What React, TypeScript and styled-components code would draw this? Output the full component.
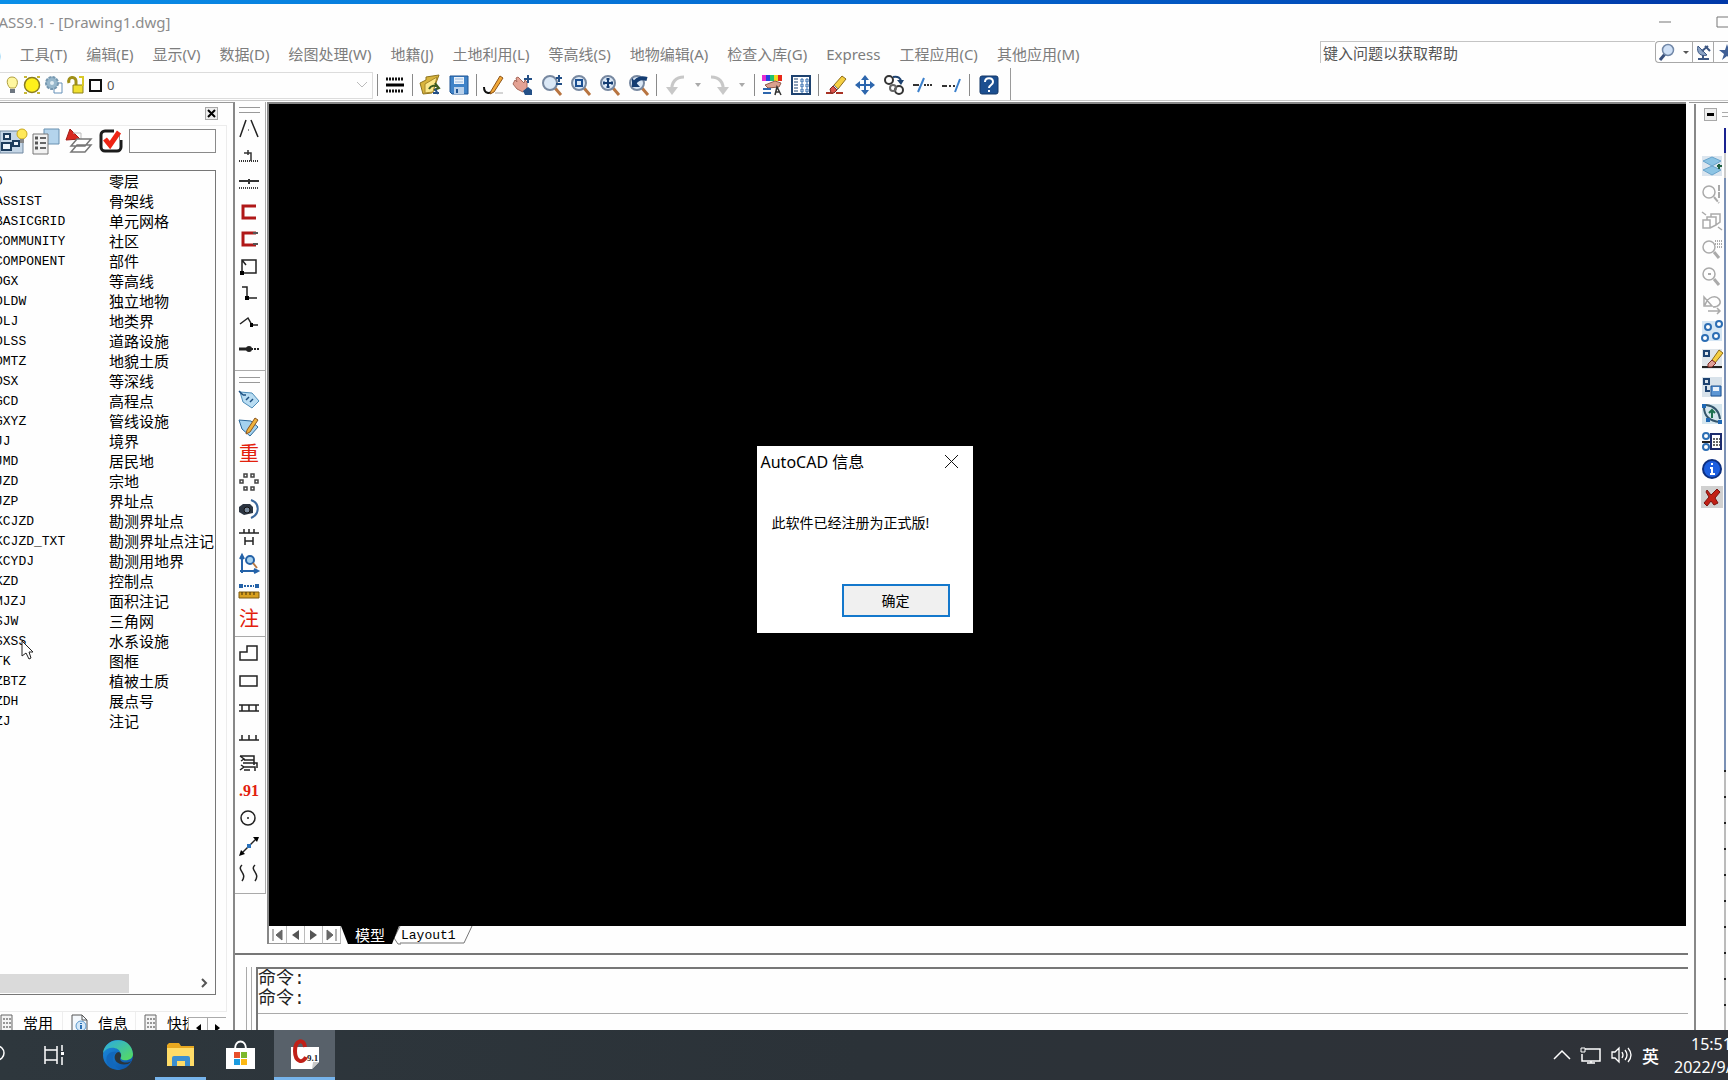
import React from "react";
import styled, { createGlobalStyle } from "styled-components";

const ui = `"Noto Sans", "Noto Sans CJK SC", sans-serif`;
const mono = `"Liberation Mono", "Noto Sans CJK SC", monospace`;

const Global = createGlobalStyle`
  * { box-sizing: border-box; }
  html, body { margin: 0; overflow: hidden; }
  body { background: #fefefe; color: #000; font-family: ${ui}; }
  button, input, select { font: inherit; color: inherit; margin: 0; padding: 0; border: 0; background: none; border-radius: 0; }
  button { display: flex; align-items: center; justify-content: center; }
  svg { display: block; flex: none; overflow: visible; }
`;

/* ---------- page frame ---------- */

const Desktop = styled.div`
  position: relative;
  display: flex;
  flex-direction: column;
  height: 100vh;
  overflow: hidden;
`;

const TopStrip = styled.div`
  height: 4px;
  flex: none;
  background: linear-gradient(90deg, #0a8fe8, #0468d0 50%, #0038a8);
`;

const TitleBar = styled.header`
  display: flex;
  align-items: center;
  height: 36px;
  flex: none;
  color: #8c8c8c;
`;

const Title = styled.h1`
  flex: 1;
  margin: 0 0 0 -11px;
  font-size: 15px;
  font-weight: 400;
  white-space: nowrap;
`;

const WindowButtons = styled.div`
  display: flex;
  gap: 46px;
  margin-right: -11px;
`;

const MenuRow = styled.div`
  display: flex;
  align-items: center;
  height: 28px;
  flex: none;
`;

const Menu = styled.nav`
  display: flex;
  flex: 1;
  gap: 19px;
  margin-left: -46px;
`;

const MenuLink = styled.a`
  font-size: 15px;
  line-height: 24px;
  color: #7d7d7d;
  text-decoration: none;
  white-space: nowrap;
`;

const HelpSearch = styled.div`
  display: flex;
  width: 408px;
  height: 22px;
  margin-bottom: 4px;
  flex: none;
`;

const HelpInput = styled.input`
  flex: 1;
  min-width: 0;
  padding-left: 2px;
  border-top: 1px solid #c4c4c4;
  border-left: 1px solid #c4c4c4;
  font-size: 15px;
  line-height: 20px;
  color: #555;
  &::placeholder { color: #555; opacity: 1; }
`;

const HelpButtons = styled.div`
  display: flex;
  width: 73px;
  overflow: hidden;
  border: 1px solid #a8a8a8;
  border-right: 0;
  border-radius: 4px 0 0 4px;
`;

const HelpButton = styled.button<{ $w: number }>`
  width: ${(p) => p.$w}px;
  flex: none;
  gap: 8px;
  & + & { border-left: 1px solid #a8a8a8; }
`;

const ToolbarRow = styled.div`
  display: flex;
  height: 33px;
  flex: none;
  border-bottom: 1px solid #c8c8c8;
`;

const Toolbar = styled.div`
  display: flex;
  align-items: center;
  padding: 2px 2px 0 0;
  border-right: 1px solid #9a9a9a;
`;

const LayerCombo = styled.div`
  display: flex;
  align-items: center;
  gap: 4px;
  width: 373px;
  height: 27px;
  margin-right: 4px;
  padding: 0 5px 0 6px;
  border: 1px solid #dcdcdc;
  border-left: 0;
`;

const LayerSelect = styled.select`
  flex: 1;
  appearance: none;
  padding-left: 1px;
  font-size: 13px;
  color: #555;
`;

const ToolGroup = styled.div<{ $pad?: number }>`
  display: flex;
  align-items: center;
  gap: 9px;
  height: 22px;
  padding: 0 ${(p) => p.$pad ?? 7}px;
  border-left: 1px solid #8a8a8a;
`;

const ToolButton = styled.button`
  width: 20px;
  height: 20px;
  flex: none;
`;

const CaretButton = styled.button`
  width: 6px;
  height: 20px;
`;

/* ---------- working area ---------- */

const Work = styled.main`
  display: flex;
  flex: 1;
  min-height: 0;
  margin-top: 1px;
`;

const LayerPanel = styled.section`
  display: flex;
  flex-direction: column;
  width: 235px;
  flex: none;
  border-top: 1px solid #999;
  border-right: 2px solid #888;
`;

const PanelHead = styled.div`
  display: flex;
  justify-content: flex-end;
  height: 22px;
  padding: 4px 15px 0 0;
  flex: none;
`;

const SmallButton = styled.button`
  width: 13px;
  height: 13px;
  border: 1px solid #a8a8a8;
  background: #eee;
`;

const PanelBody = styled.div`
  display: flex;
  flex-direction: column;
  flex: 1;
  min-height: 0;
  margin-right: 6px;
  padding-right: 10px;
  border: 1px solid #ececec;
  border-left: 0;
`;

const PanelTools = styled.div`
  display: flex;
  align-items: center;
  gap: 5px;
  height: 30px;
  flex: none;
`;

const FilterInput = styled.input`
  flex: 1;
  min-width: 0;
  height: 24px;
  border: 1px solid #8a8a8a;
`;

const ListBox = styled.div`
  display: flex;
  flex-direction: column;
  flex: 1;
  min-height: 0;
  margin: 14px 0 16px;
  border: 1px solid #777;
  border-left: 0;
`;

const ListScroll = styled.div`
  flex: 1;
  min-height: 0;
  overflow: hidden;
`;

const LayerTable = styled.table`
  width: 100%;
  border-collapse: collapse;
  table-layout: fixed;
`;

const LayerCell = styled.td<{ $code?: boolean }>`
  width: ${(p) => (p.$code ? "109px" : "auto")};
  height: 20px;
  padding: 0;
  padding-top: ${(p) => (p.$code ? 2 : 0)}px;
  font-family: ${(p) => (p.$code ? mono : ui)};
  font-size: ${(p) => (p.$code ? 13 : 15)}px;
  line-height: ${(p) => (p.$code ? 18 : 20)}px;
  white-space: nowrap;
`;

const CodeText = styled.span`
  margin-left: -5px;
`;

const ScrollBar = styled.div`
  display: flex;
  align-items: center;
  justify-content: space-between;
  height: 22px;
  padding-right: 7px;
  flex: none;
`;

const ScrollThumb = styled.div`
  width: 129px;
  height: 19px;
  background: #dadada;
`;

const PanelTabs = styled.div`
  display: flex;
  align-items: flex-start;
  height: 18px;
  overflow: hidden;
  flex: none;
`;

const PanelTab = styled.button<{ $w: number }>`
  width: ${(p) => p.$w}px;
  height: 22px;
  flex: none;
  gap: 10px;
  overflow: hidden;
  justify-content: flex-start;
  font-size: 15px;
  line-height: 22px;
  white-space: nowrap;
  & + & { border-left: 1px solid #eee; padding-left: 8px; }
`;

const TabScroll = styled.button`
  width: 19px;
  height: 20px;
  margin-top: 5px;
  border: 1px solid #aaa;
  border-width: 1px 0 0 1px;
  flex: none;
`;

const Center = styled.div`
  display: flex;
  flex-direction: column;
  flex: 1;
  min-width: 0;
`;

const DrawRow = styled.div`
  display: flex;
  flex: 1;
  min-height: 0;
`;

const Strip = styled.aside`
  width: 31px;
  align-self: flex-start;
  padding: 5px 0 10px;
  border-right: 1px solid #aaa;
  border-bottom: 1px solid #aaa;
`;

const StripGroup = styled.div<{ $line?: number }>`
  padding: 0 4px;
  ${(p) => p.$line && `border-top: 1px solid #aaa; margin-top: ${p.$line}px; padding-top: 6px;`}
`;

const StripList = styled.div`
  display: flex;
  flex-direction: column;
  justify-content: space-between;
  height: 240px;
`;

const Grip = styled.div`
  height: 6px;
  margin: 0 1px 6px 0;
  border: 1px solid #999;
  border-width: 1px 0;
`;

const StripButton = styled.button`
  width: 20px;
  height: 20px;
`;

const RedGlyph = styled.span<{ $latin?: boolean }>`
  font-size: ${(p) => (p.$latin ? 16 : 20)}px;
  line-height: 20px;
  font-weight: ${(p) => (p.$latin ? 700 : 400)};
  font-family: ${(p) => (p.$latin ? `"Liberation Serif", serif` : ui)};
  color: #e2200c;
`;

const CanvasColumn = styled.div`
  display: flex;
  flex-direction: column;
  flex: 1;
  min-width: 0;
  margin: 0 2px 9px 1px;
  border-left: 2px solid #888;
  border-top: 2px solid #888;
`;

const Canvas = styled.div`
  flex: 1;
  background: #000;
`;

const SheetTabs = styled.div`
  display: flex;
  height: 18px;
  flex: none;
`;

const SheetNav = styled.button`
  width: 18px;
  border-right: 1px solid #bbb;
  border-bottom: 1px solid #999;
`;

const ModelTab = styled.button`
  width: 58px;
  background: #000;
  color: #fff;
  font-size: 15px;
  line-height: 16px;
  clip-path: polygon(0 0, 100% 0, 88% 100%, 12% 100%);
`;

const LayoutTab = styled.button`
  display: flex;
  align-items: center;
  margin-left: -6px;
  font-family: ${mono};
  font-size: 13px;
`;

const CommandArea = styled.section`
  display: flex;
  height: 77px;
  flex: none;
  padding-top: 12px;
  border-top: 2px solid #777;
`;

const CommandGrip = styled.div`
  width: 6px;
  margin: 0 4px 0 11px;
  border: 1px solid #aaa;
  border-width: 0 1px;
`;

const CommandBox = styled.div`
  flex: 1;
  border: 2px solid #777;
  border-right: 0;
  border-bottom: 0;
  font-size: 18px;
  line-height: 20px;
  color: #222;
`;

const CommandLog = styled.div`
  height: 45px;
  overflow: hidden;
  border-bottom: 1px solid #aaa;
  font-family: "Liberation Mono", "Noto Sans CJK SC", monospace;
`;

const CommandInput = styled.input`
  width: 100%;
  height: 17px;
  padding-left: 2px;
`;

const Rail = styled.aside`
  display: flex;
  width: 39px;
  margin-left: 1px;
  flex: none;
  border-top: 1px solid #999;
`;

const RailTools = styled.div`
  display: flex;
  flex-direction: column;
  width: 32px;
  margin: 1px 0 0 5px;
  padding: 4px 0 0 5px;
  border-left: 2px solid #888;
`;

const RailHead = styled.div`
  display: flex;
  align-items: center;
  gap: 5px;
  width: 30px;
  padding-left: 3px;
  margin-bottom: 34px;
`;

const RailGrip = styled.div`
  width: 9px;
  height: 5px;
  flex: none;
  border: 1px solid #aaa;
  border-width: 1px 0;
`;

const RailList = styled.div`
  display: flex;
  flex-direction: column;
  justify-content: space-between;
  height: 353px;
`;

const RailButton = styled.button<{ $lit?: boolean; $off?: boolean }>`
  width: 22px;
  height: 22px;
  flex: none;
  background: ${(p) => (p.$lit ? "#d0d0d0" : "none")};
  color: ${(p) => (p.$off ? "#aaa" : "#234f86")};
`;

const RailEdge = styled.div`
  display: flex;
  flex-direction: column;
  width: 2px;
  margin-left: -2px;
  padding-top: 25px;
`;

const EdgeNavy = styled.div`
  height: 25px;
  background: #1a2290;
`;

const EdgeGap = styled.div`
  height: 25px;
  background: #ccc;
`;

const EdgeBlue = styled.div`
  height: 592px;
  background: #7a90b4;
`;

const EdgeDots = styled.div`
  flex: 1;
  background: repeating-linear-gradient(#222 0 2px, #bbb 2px 26px);
`;

/* ---------- message box ---------- */

const Overlay = styled.div`
  position: absolute;
  inset: 0;
  display: flex;
  align-items: center;
  justify-content: center;
`;

const MessageBox = styled.div`
  width: 216px;
  margin: 0 0 2px 1px;
  background: #fff;
`;

const BoxHead = styled.div`
  display: flex;
  align-items: center;
  justify-content: space-between;
  height: 32px;
  padding: 0 15px 0 4px;
`;

const BoxTitle = styled.h2`
  margin: 0;
  font-size: 16px;
  line-height: 24px;
  font-weight: 400;
`;

const BoxText = styled.p`
  margin: 0;
  padding: 34px 0 50px 15px;
  font-size: 14px;
  line-height: 22px;
`;

const OkButton = styled.button`
  width: 108px;
  height: 33px;
  margin: 0 23px 16px auto;
  border: 2px solid #1478cc;
  background: #f0f0f0;
  font-size: 14px;
`;

const Pointer = styled.div`
  position: absolute;
  left: 21px;
  top: 640px;
`;

/* ---------- taskbar ---------- */

const Taskbar = styled.footer`
  display: flex;
  height: 50px;
  flex: none;
  background: linear-gradient(90deg, #2e373d, #2b3238 50%, #2f3238);
  color: #fff;
`;

const TaskButton = styled.button<{ $active?: boolean; $open?: boolean; $w?: number }>`
  width: ${(p) => p.$w ?? 61}px;
  height: 50px;
  background: ${(p) => (p.$active ? "#58616a" : "none")};
  ${(p) => (p.$active || p.$open) && "border-bottom: 3px solid #76b4ec; padding-top: 3px;"}
`;

const TaskGap = styled.span`
  width: 4px;
`;

const Tray = styled.div`
  display: flex;
  align-items: center;
  gap: 10px;
  width: 174px;
  margin-left: auto;
`;

const Lang = styled.button`
  font-size: 17px;
  font-weight: 500;
`;

const Clock = styled.time`
  width: 54px;
  flex: none;
  margin: 2px 0 0 5px;
  font-size: 16px;
  line-height: 23px;
  white-space: nowrap;
`;

const ClockLine = styled.div<{ $indent?: boolean }>`
  padding-left: ${(p) => (p.$indent ? 17 : 0)}px;
`;

/* ---------- icons ---------- */

function Ico({ s = 20, children }: { s?: number; children: React.ReactNode }) {
  return (
    <svg width={s} height={s} viewBox="0 0 20 20" fill="none" stroke="currentColor" aria-hidden="true">
      {children}
    </svg>
  );
}

const Lens = ({ children }: { children?: React.ReactNode }) => (
  <Ico>
    <path d="M13 13l6 7" stroke="#b87440" strokeWidth="3" />
    <circle cx="8" cy="8" r="7" fill="#dbe8f6" stroke="#7788a0" strokeWidth="2" />
    {children}
  </Ico>
);

const Caret = () => (
  <svg width="6" height="4" viewBox="0 0 6 4" aria-hidden="true"><path d="M0 0h6L3 4z" fill="#aaa" /></svg>
);

const toolIcons: Record<string, React.ReactNode> = {
  线宽: <Ico><path d="M1 4h18M1 16h18" stroke="#111" strokeWidth="3" strokeDasharray="2 1" /><path d="M1 10h18" stroke="#000" strokeWidth="3" /></Ico>,
  打开: <Ico><path d="M0 8l6-3V2l13-2-3 8-4 10-9 1z" fill="#d8b43c" stroke="#8e7420" /><path d="M5 9L17 2l-4 15-8 1z" fill="#fbe88c" stroke="#a8882a" /><path d="M9 14c2-4 6-4 9-2M15 8l4 5-5 2" fill="none" stroke="#3c5c20" strokeWidth="2" /><path d="M15 14l3 5M13 18h6" stroke="#234f86" strokeWidth="2" /></Ico>,
  保存: <Ico><path d="M1 1h18v18H3l-2-2z" fill="#3f83c8" stroke="#1f5594" /><path d="M5 2h10v7H5z" fill="#eaf2fb" stroke="none" /><path d="M6 4h8M6 7h8" stroke="#9cb8d8" /><path d="M5 12h10v7H5z" fill="#b8d0ea" stroke="none" /><path d="M7 14h2v4H7z" fill="#1f5594" stroke="none" /></Ico>,
  画笔: <Ico><path d="M0 12c0 7 6 7 9 4" stroke="#111" strokeWidth="2" /><path d="M7 16L16 1l3 2-9 14-4 2z" fill="#f2a838" stroke="#8e5518" /><path d="M11 18h8" stroke="#aaa" /></Ico>,
  平移: <Ico><path d="M0 9l2-4 2 2-1-4 2-1 6 6 1-3 2 2v6l-4 4-6-3z" fill="#e4a294" stroke="#a86a5c" /><path d="M10 16l5-4 4 3v5h-7z" fill="#234f86" stroke="none" /><path d="M15 0v8M11 4h8" stroke="#234f86" strokeWidth="2" /></Ico>,
  实时缩放: <Lens><path d="M17 0v7M14 3h6M14 9h6" stroke="#234f86" strokeWidth="2" /></Lens>,
  窗口缩放: <Lens><path d="M5 5h6v6H5z" stroke="#1b4f92" strokeWidth="2" /></Lens>,
  范围缩放: <Lens><path d="M8 3v10M3 8h10" stroke="#143c72" strokeWidth="2" /><path d="M6 4h4M6 12h4M4 6v4M12 6v4" stroke="#143c72" /></Lens>,
  上一视图: <Lens><path d="M5 9C7 5 11 2 18 4" stroke="#143c72" strokeWidth="4" /><path d="M3 3v9h8z" fill="#143c72" stroke="none" /></Lens>,
  放弃: <Ico><path d="M18 2C10 2 5 7 6 16" stroke="#c8c8c8" strokeWidth="3" /><path d="M0 12h12l-6 8z" fill="#c8c8c8" stroke="none" /></Ico>,
  重做: <Ico><path d="M1 2c8 0 13 5 12 14" stroke="#c8c8c8" strokeWidth="3" /><path d="M7 12h12l-6 8z" fill="#c8c8c8" stroke="none" /></Ico>,
  特性匹配: <Ico><path d="M0 0h4v6H0z" fill="#e42bd0" stroke="none" /><path d="M4 0h4v6H4z" fill="#2442e0" stroke="none" /><path d="M8 0h4v6H8z" fill="#20c070" stroke="none" /><path d="M12 0h4v6h-4z" fill="#f0d820" stroke="none" /><path d="M16 0h4v6h-4z" fill="#e82818" stroke="none" /><path d="M3 10l10-4 6 2-2 4-11 1z" fill="#dba18e" stroke="#8f594a" /><path d="M1 14h8M1 18h8" stroke="#2d66ad" strokeWidth="2" /><path d="M13 20l2-8 4 8M14 17h4" stroke="#333" strokeWidth="1.5" /></Ico>,
  设计中心: <Ico><path d="M1 1h18v18H1z" fill="#fff" stroke="#1d4270" strokeWidth="2" /><path d="M3 4h4M3 7h4M3 10h4M3 13h4M3 16h4" stroke="#1d4270" /><path d="M10 4h2v3h-2zM15 4h2v3h-2zM10 9h2v3h-2zM15 9h2v3h-2zM10 14h2v3h-2zM15 14h2v3h-2z" stroke="#2a66ac" /></Ico>,
  删除: <Ico><path d="M0 18h20" stroke="#a83225" strokeDasharray="7 3" strokeWidth="2" /><path d="M8 10l8-9 4 3-8 10z" fill="#f5cf42" stroke="#8c6a18" /><path d="M7 11l1-1 4 4-1 1z" fill="#e8e8e8" stroke="#777" /><path d="M4 14l3-3 4 4-3 3H5z" fill="#d9534a" stroke="#7a2822" /></Ico>,
  移动: <Ico><path d="M10 3v14M3 10h14" stroke="#2d66ad" strokeWidth="2" /><path d="M6 5h8l-4-5zM6 15h8l-4 5zM5 6v8l-5-4zM15 6v8l5-4z" fill="#2d66ad" stroke="none" /></Ico>,
  复制: <Ico><circle cx="5" cy="5" r="4" stroke="#333" strokeWidth="2" /><circle cx="15" cy="15" r="4" stroke="#333" strokeWidth="2" /><circle cx="9" cy="13" r="3" stroke="#666" strokeWidth="2" /><path d="M9 2c5-1 8 1 8 5" stroke="#1d4270" strokeWidth="2" /><path d="M13 5h7l-3 5z" fill="#1d4270" stroke="none" /></Ico>,
  修剪: <Ico><path d="M0 10h6" stroke="#333" strokeWidth="2" /><path d="M11 10h9" stroke="#333" strokeWidth="2" strokeDasharray="2 1" /><path d="M5 17l6-14" stroke="#3b80cc" strokeWidth="2" /></Ico>,
  延伸: <Ico><path d="M0 11h13" stroke="#333" strokeWidth="2" strokeDasharray="5 2 2 2" /><path d="M13 17l5-13" stroke="#3b80cc" strokeWidth="2" /></Ico>,
  帮助: <Ico><rect x="1" y="1" width="18" height="18" rx="2" fill="#1c4f90" stroke="#123666" /><path d="M6 7c0-5 8-5 8 0 0 3-4 3-4 6M10 15v2" stroke="#fff" strokeWidth="2" /></Ico>,
};

const stripIcons: Record<string, React.ReactNode> = {
  交会: <Ico><path d="M7 1L1 18M12 1l7 17" stroke="#222" strokeWidth="1.5" /><path d="M9 11h1" stroke="#222" /></Ico>,
  垂线: <Ico><path d="M5 6h7v8M9 3v5" stroke="#333" strokeWidth="1.5" /><path d="M0 14h20" stroke="#333" strokeDasharray="1 1" strokeWidth="2" /></Ico>,
  平行: <Ico><path d="M0 7h20M10 5v5" stroke="#333" strokeWidth="2" /><path d="M0 14h20" stroke="#444" strokeDasharray="1 1" strokeWidth="2" /></Ico>,
  红框一: <Ico><path d="M17 4H4v12h13" stroke="#b01818" strokeWidth="3" /></Ico>,
  红框二: <Ico><path d="M17 4H4v12h13" stroke="#b01818" strokeWidth="3" /><path d="M14 15h5M14 4h5" stroke="#555" strokeWidth="2" /></Ico>,
  方框: <Ico><path d="M3 3h14v13H3zM3 3l4 5" stroke="#222" strokeWidth="1.5" /><path d="M1 14h4v4H1z" fill="#000" stroke="none" /></Ico>,
  折线: <Ico><path d="M3 3h5v11h10" stroke="#222" strokeWidth="1.5" /><path d="M6 12h4v4H6z" fill="#000" stroke="none" /></Ico>,
  锯齿: <Ico><path d="M1 12l8-6 4 7h6" stroke="#222" strokeWidth="1.5" /><path d="M11 11h3v4h-3z" fill="#000" stroke="none" /></Ico>,
  连线: <Ico><path d="M0 10h12" stroke="#222" strokeWidth="3" /><path d="M12 10h8" stroke="#222" strokeWidth="2" strokeDasharray="2 1" /><circle cx="10" cy="10" r="3" fill="#222" stroke="none" /></Ico>,
  标签: <Ico><path d="M1 3l12 1 7 8-7 7-9-6z" fill="#b8dcf2" stroke="#4b8cb8" /><path d="M0 2l4 4M4 6h3M7 11l3-3M11 13l3-3" stroke="#1d4f80" strokeWidth="1.5" /></Ico>,
  标签编辑: <Ico><path d="M0 3l12 1 7 6-8 9-8-7z" fill="#a4d2ee" stroke="#2c6898" /><path d="M8 13L16 1l3 2-8 12-4 2z" fill="#efb23c" stroke="#8a5520" /></Ico>,
  重: <RedGlyph>重</RedGlyph>,
  阵列: <Ico><path d="M5 2h3v3H5zM12 2h3v3h-3zM1 8h3v3H1zM16 8h3v3h-3zM5 15h3v3H5zM12 15h3v3h-3z" stroke="#444" strokeWidth="1.5" /></Ico>,
  相机: <Ico><path d="M0 8l4-3h7l3 3v6l-9 2-5-3z" fill="#2b3440" stroke="none" /><circle cx="8" cy="11" r="3" fill="#7a8a9c" stroke="#111" /><path d="M12 1c9 3 9 14 0 18" stroke="#3a679c" strokeWidth="2" /></Ico>,
  坎线: <Ico><path d="M0 6h20M5 6V2M10 6V2M15 6V2M6 10v8M14 10v8M6 14h8" stroke="#222" strokeWidth="1.5" /></Ico>,
  坐标查询: <Ico><path d="M3 19V2M1 5l2-4 2 4M1 17h18M15 15l4 2-4 2" stroke="#2462a8" strokeWidth="2" /><circle cx="11" cy="6" r="4" fill="#a8d2ee" stroke="#2462a8" strokeWidth="2" /><path d="M14 9l4 5" stroke="#b87840" strokeWidth="2" /></Ico>,
  量距: <Ico><path d="M0 2h4v4H0zM16 2h4v4h-4z" fill="#2462a8" stroke="none" /><path d="M5 4h10" stroke="#2462a8" strokeWidth="2" strokeDasharray="2 1" /><path d="M0 10h20v6H0z" fill="#d8a020" stroke="#7c5a10" /><path d="M3 10v3M7 10v3M11 10v3M15 10v3" stroke="#3c2c08" /></Ico>,
  注: <RedGlyph>注</RedGlyph>,
  多边形: <Ico><path d="M1 17V9h7V3h10v14z" stroke="#222" strokeWidth="1.5" /></Ico>,
  矩形: <Ico><path d="M1 5h17v10H1z" stroke="#222" strokeWidth="1.5" /></Ico>,
  双线: <Ico><path d="M0 7h20M0 13h20M3 7v6M10 7v6M17 7v6" stroke="#222" strokeWidth="1.5" /></Ico>,
  陡坎: <Ico><path d="M0 14h20M3 14V9M10 14V9M17 14V9" stroke="#222" strokeWidth="1.5" /></Ico>,
  楼梯: <Ico><path d="M1 3h14v9M1 3l4 3-3 2M5 7h10M4 10h14v5M1 17l4-3-3-2M5 14h11v4M5 17h6" stroke="#222" strokeWidth="1.5" /></Ico>,
  高程: <RedGlyph $latin>.91</RedGlyph>,
  圆: <Ico><circle cx="9" cy="10" r="7" stroke="#222" strokeWidth="1.5" /><circle cx="9" cy="10" r="1" fill="#222" stroke="none" /></Ico>,
  直线: <Ico><path d="M2 18L18 2" stroke="#222" strokeWidth="1.5" /><path d="M14 1h6l-2 5zM0 20l2-6 4 4z" fill="#000" stroke="none" /><path d="M8 8h4v4H8z" fill="#2a72bc" stroke="none" /></Ico>,
  曲线: <Ico><path d="M3 2c-6 5 6 8 0 16M16 2c-6 5 6 8 0 16" stroke="#222" strokeWidth="1.5" /></Ico>,
};

const railIcons: [string, React.ReactNode, boolean?][] = [
  ["图层", <Ico><path d="M0 0h20v20H0z" fill="#dbe5ee" stroke="none" /><path d="M1 5l9-4 9 4-9 5zM1 14l9-4 9 4-9 5z" fill="#8cc4e4" stroke="#68a4cc" /><path d="M17 8v5M15 10h5" stroke="#1d6040" strokeWidth="2" /></Ico>],
  ["缩放", <Ico><circle cx="7" cy="8" r="6" strokeWidth="1.5" /><path d="M12 13l5 6M17 1v14" strokeWidth="2" strokeDasharray="6 1" /></Ico>, true],
  ["堆叠", <Ico><path d="M1 9h7v8H1zM5 9V6h9v8l-6 3M9 6V3h9v8l-4 3M0 1l4 3M16 16l4 3" strokeWidth="1.5" /></Ico>, true],
  ["网格缩放", <Ico><circle cx="7" cy="8" r="6" strokeWidth="1.5" /><path d="M12 13l5 6" strokeWidth="3" /><path d="M13 2h7M13 5h7M15 8h5" strokeDasharray="1 1" strokeWidth="2" /></Ico>, true],
  ["中心缩放", <Ico><circle cx="7" cy="8" r="6" strokeWidth="1.5" /><path d="M12 13l5 6" strokeWidth="3" /><path d="M6 8h3" strokeWidth="2" /></Ico>, true],
  ["返回", <Ico><path d="M2 3v9h8zM3 11C6 2 14 1 17 5s0 8-6 8M6 17h12M15 14l3 3-3 3" strokeWidth="1.5" /></Ico>, true],
  ["点组", <Ico><path d="M0 0h20v20H0z" fill="#d5e6f4" stroke="none" /><circle cx="6" cy="6" r="3" fill="#fff" stroke="#2c6eb4" strokeWidth="2" /><circle cx="17" cy="3" r="3" fill="#fff" stroke="#2c6eb4" strokeWidth="2" /><circle cx="3" cy="17" r="3" fill="#fff" stroke="#2c6eb4" strokeWidth="2" /><circle cx="14" cy="15" r="3" fill="#fff" stroke="#2c6eb4" strokeWidth="2" /></Ico>],
  ["擦除", <Ico><path d="M0 0h20v20H0z" fill="#dfe5ea" stroke="none" /><path d="M2 2h5v5H2z" stroke="#1d4270" strokeWidth="2" /><path d="M0 18h20" stroke="#222" strokeWidth="2" /><path d="M10 11l7-10 4 3-8 10z" fill="#f5cf42" stroke="#8c6a18" /><path d="M6 15l4-4 4 3-4 4H6z" fill="#e0a098" stroke="#7a2822" /></Ico>],
  ["存块", <Ico><path d="M0 0h20v20H0z" fill="#d8e2ea" stroke="none" /><path d="M2 2h5v5H2zM4 9v5h4" stroke="#1d4270" strokeWidth="2" /><path d="M9 9h10v10H9z" fill="#5c96d4" stroke="#1f5594" /><path d="M11 10h6v4h-6z" fill="#eaf2fb" stroke="none" /></Ico>],
  ["弧线", <Ico><path d="M0 0h20v20H0z" fill="#d5e6ee" stroke="none" /><path d="M2 3c0 8 5 14 16 15M4 1c8 1 13 6 14 14" stroke="#34566c" strokeWidth="2" /><path d="M10 14V7M7 9l3-3 3 3" stroke="#1d7050" strokeWidth="2" /><path d="M0 0h4v4H0zM16 16h4v4h-4zM4 14h4v4H4z" fill="#1f68b4" stroke="none" /></Ico>],
  ["属性表", <Ico><circle cx="4" cy="4" r="3" stroke="#2c6eb4" strokeWidth="2" /><circle cx="4" cy="15" r="3" stroke="#2c6eb4" strokeWidth="2" /><path d="M0 10h8" stroke="#222" strokeWidth="2" /><path d="M9 2h10v15H9z" fill="#fff" stroke="#1c2b6c" strokeWidth="2" /><path d="M11 7h7M11 10h7M11 13h7" stroke="#333" strokeWidth="1.5" strokeDasharray="2 1" /></Ico>],
  ["信息", <Ico><circle cx="10" cy="10" r="9" fill="#1c5fe0" stroke="#0c2f80" strokeWidth="2" /><path d="M10 4v2M8 9h2v6M8 15h5" stroke="#fff" strokeWidth="2" /></Ico>],
  ["关闭图形", <Ico><path d="M5 3l4 5 6-6 3 3-5 6 3 5-4 2-3-4-4 5-3-3 5-6-3-5z" fill="#c22015" stroke="#7c120c" /></Ico>],
];

const group1 = ["交会", "垂线", "平行", "红框一", "红框二", "方框", "折线", "锯齿", "连线"];
const group2 = ["标签", "标签编辑", "重", "阵列", "相机", "坎线", "坐标查询", "量距", "注"];
const group3 = ["多边形", "矩形", "双线", "陡坎", "楼梯", "高程", "圆", "直线", "曲线"];

const menus = ["文件(F)", "工具(T)", "编辑(E)", "显示(V)", "数据(D)", "绘图处理(W)", "地籍(J)", "土地利用(L)", "等高线(S)", "地物编辑(A)", "检查入库(G)", "Express", "工程应用(C)", "其他应用(M)"];

const layers: [string, string][] = [
  ["0", "零层"], ["ASSIST", "骨架线"], ["BASICGRID", "单元网格"], ["COMMUNITY", "社区"], ["COMPONENT", "部件"],
  ["DGX", "等高线"], ["DLDW", "独立地物"], ["DLJ", "地类界"], ["DLSS", "道路设施"], ["DMTZ", "地貌土质"],
  ["DSX", "等深线"], ["GCD", "高程点"], ["GXYZ", "管线设施"], ["JJ", "境界"], ["JMD", "居民地"],
  ["JZD", "宗地"], ["JZP", "界址点"], ["KCJZD", "勘测界址点"], ["KCJZD_TXT", "勘测界址点注记"], ["KCYDJ", "勘测用地界"],
  ["KZD", "控制点"], ["MJZJ", "面积注记"], ["SJW", "三角网"], ["SXSS", "水系设施"], ["TK", "图框"],
  ["ZBTZ", "植被土质"], ["ZDH", "展点号"], ["ZJ", "注记"],
];

const Tools = ({ names }: { names: string[] }) => (
  <>{names.map((n) => <ToolButton key={n} aria-label={n}>{toolIcons[n]}</ToolButton>)}</>
);

const StripTools = ({ names }: { names: string[] }) => (
  <StripList>{names.map((n) => <StripButton key={n} aria-label={n}>{stripIcons[n]}</StripButton>)}</StripList>
);

const GridIcon = () => (
  <svg width="13" height="18" viewBox="0 0 13 18" aria-hidden="true"><path d="M1 1h11v17H1z" fill="#f4f4f4" stroke="#666" /><path d="M4 4v13M7 4v13M10 4v13" stroke="#777" strokeWidth="1.5" strokeDasharray="2 2" /></svg>
);

export default function App() {
  return (
    <Desktop>
      <Global />
      <TopStrip />
      <TitleBar>
        <Title>CASS9.1 - [Drawing1.dwg]</Title>
        <WindowButtons>
          <button aria-label="最小化"><svg width="12" height="12"><path d="M0 6h12" stroke="#777" /></svg></button>
          <button aria-label="最大化"><svg width="22" height="12"><path d="M0 1h12v10H0z" fill="none" stroke="#777" /></svg></button>
        </WindowButtons>
      </TitleBar>

      <MenuRow>
        <Menu>{menus.map((m) => <MenuLink key={m} href="#">{m}</MenuLink>)}</Menu>
        <HelpSearch>
          <HelpInput aria-label="帮助" placeholder="键入问题以获取帮助" />
          <HelpButtons>
            <HelpButton $w={36} aria-label="搜索">
              <svg width="16" height="17" viewBox="0 0 16 17"><path d="M6 10l-5 6" stroke="#39507c" strokeWidth="3" /><circle cx="9" cy="6" r="5.5" fill="#cfe0f6" stroke="#7288a8" strokeWidth="1.5" /></svg>
              <svg width="6" height="3"><path d="M0 0h6L3 3z" fill="#555" /></svg>
            </HelpButton>
            <HelpButton $w={21} aria-label="通讯中心">
              <svg width="15" height="15" viewBox="0 0 15 15"><path d="M2 1c-2 7 3 11 9 9z" fill="#8aa2c4" stroke="#3c5682" /><path d="M6 6l6-5M9 1l5 5M2 14h11M7 10v4" stroke="#3c5682" strokeWidth="2" /></svg>
            </HelpButton>
            <HelpButton $w={26} aria-label="收藏夹">
              <svg width="16" height="16" viewBox="0 0 16 16"><path d="M8 0l2 6h6l-5 4 2 6-5-4-5 4 2-6-5-4h6z" fill="#3f5f96" /></svg>
            </HelpButton>
          </HelpButtons>
        </HelpSearch>
      </MenuRow>

      <ToolbarRow>
        <Toolbar>
          <LayerCombo>
            <svg width="13" height="20" viewBox="0 0 13 20"><path d="M4 13C0 9 0 2 6 2s7 7 3 11z" fill="#fff7a0" stroke="#b0a040" /><path d="M4 14h5v4H4z" fill="#6d7680" /></svg>
            <svg width="18" height="18" viewBox="0 0 18 18"><path d="M1 1h3M14 1h3M1 17h3M14 17h3" stroke="#c8b838" strokeWidth="2" /><circle cx="9" cy="9" r="7.5" fill="#fff01c" stroke="#8a7c20" strokeWidth="1.5" /></svg>
            <svg width="18" height="18" viewBox="0 0 18 18"><path d="M9 7h8v10H9z" fill="#fff" stroke="#6590b8" /><circle cx="7" cy="7" r="6" fill="#98b8cc" stroke="#7698b0" strokeWidth="2" strokeDasharray="3 1" /><circle cx="7" cy="7" r="2" fill="#e2eef4" /></svg>
            <svg width="18" height="18" viewBox="0 0 18 18"><path d="M2 7C0 0 9 0 9 5v4" fill="none" stroke="#a09018" strokeWidth="3" /><path d="M6 9h10v8H6z" fill="#f0e030" stroke="#8c8018" /><path d="M12 1h4v9" fill="none" stroke="#d8c828" strokeWidth="2" /></svg>
            <svg width="13" height="13"><path d="M1 1h11v11H1z" fill="#fff" stroke="#111" strokeWidth="2" /></svg>
            <LayerSelect aria-label="图层"><option>0</option></LayerSelect>
            <svg width="10" height="6"><path d="M0 0l5 5 5-5" fill="none" stroke="#bbb" /></svg>
          </LayerCombo>
          <ToolGroup><Tools names={["线宽"]} /></ToolGroup>
          <ToolGroup><Tools names={["打开", "保存"]} /></ToolGroup>
          <ToolGroup><Tools names={["画笔", "平移", "实时缩放", "窗口缩放", "范围缩放", "上一视图"]} /></ToolGroup>
          <ToolGroup $pad={9}>
            <Tools names={["放弃"]} />
            <CaretButton aria-label="放弃列表"><Caret /></CaretButton>
            <Tools names={["重做"]} />
            <CaretButton aria-label="重做列表"><Caret /></CaretButton>
          </ToolGroup>
          <ToolGroup><Tools names={["特性匹配", "设计中心"]} /></ToolGroup>
          <ToolGroup><Tools names={["删除", "移动", "复制", "修剪", "延伸"]} /></ToolGroup>
          <ToolGroup $pad={9}><Tools names={["帮助"]} /></ToolGroup>
        </Toolbar>
      </ToolbarRow>

      <Work>
        <LayerPanel>
          <PanelHead>
            <SmallButton aria-label="关闭面板"><svg width="7" height="7"><path d="M0 0l7 7M7 0L0 7" stroke="#000" strokeWidth="2" /></svg></SmallButton>
          </PanelHead>
          <PanelBody>
            <PanelTools>
              <button aria-label="图层状态"><svg width="27" height="27" viewBox="0 0 27 27"><path d="M0 3h23v22H0z" fill="#c5d6e6" stroke="#7088a0" /><path d="M4 6h6v5H4zM13 13h6v5h-6zM2 15h9v7H2z" fill="#eef4fa" stroke="#1d3c5c" strokeWidth="2" /><circle cx="22" cy="6" r="5" fill="#ffe858" stroke="#c8a820" /><path d="M20 11h4v4h-4z" fill="#888" /></svg></button>
              <button aria-label="图层列表"><svg width="28" height="27" viewBox="0 0 28 27"><path d="M12 1h15v15H12z" fill="#b4d4ec" stroke="#6890b0" /><path d="M1 6h15v20H1z" fill="#f2f2f2" stroke="#777" /><path d="M3 10h3M3 15h3M3 20h3" stroke="#555" strokeWidth="3" /><path d="M8 10h6M8 15h6M8 20h6" stroke="#666" strokeWidth="2" /></svg></button>
              <button aria-label="选择图层"><svg width="28" height="27" viewBox="0 0 28 27"><path d="M1 12L5 1l10 10z" fill="#d82a22" stroke="#a01c16" /><path d="M8 5h8v7" fill="none" stroke="#bbb" /><path d="M12 11h14l-6 7H6zM12 17h14l-6 7H6z" fill="#fff" stroke="#777" strokeWidth="1.5" /></svg></button>
              <button aria-label="全选"><svg width="26" height="26" viewBox="0 0 26 26"><rect x="3" y="3" width="20" height="20" rx="4" fill="#fff" stroke="#1c1c1c" strokeWidth="3" /><path d="M16 3h8v9" fill="none" stroke="#fff" strokeWidth="4" /><path d="M7 11l5 6L21 4" fill="none" stroke="#ee2414" strokeWidth="5" /></svg></button>
              <FilterInput aria-label="过滤" />
            </PanelTools>
            <ListBox>
              <ListScroll>
                <LayerTable>
                  <tbody>
                    {layers.map(([code, name]) => (
                      <tr key={code}>
                        <LayerCell $code><CodeText>{code}</CodeText></LayerCell>
                        <LayerCell>{name}</LayerCell>
                      </tr>
                    ))}
                  </tbody>
                </LayerTable>
              </ListScroll>
              <ScrollBar>
                <ScrollThumb />
                <button aria-label="向右滚动"><svg width="7" height="10"><path d="M1 1l4 4-4 4" fill="none" stroke="#555" strokeWidth="2" /></svg></button>
              </ScrollBar>
            </ListBox>
          </PanelBody>
          <PanelTabs>
            <PanelTab $w={62}><GridIcon />常用</PanelTab>
            <PanelTab $w={73}>
              <svg width="17" height="18" viewBox="0 0 17 18"><path d="M1 1h10l5 5v12H1z" fill="#f4f8fc" stroke="#555" /><path d="M11 1v5h5" fill="none" stroke="#555" /><circle cx="10" cy="12" r="5" fill="#d5e8f8" stroke="#5a98cc" /><path d="M10 9v1M10 11v4" stroke="#2a70b4" strokeWidth="2" /></svg>
              信息
            </PanelTab>
            <PanelTab $w={53}><GridIcon />快捷</PanelTab>
            <TabScroll aria-label="上一页"><svg width="5" height="8"><path d="M5 0v8L0 4z" /></svg></TabScroll>
            <TabScroll aria-label="下一页"><svg width="5" height="8"><path d="M0 0v8l5-4z" /></svg></TabScroll>
          </PanelTabs>
        </LayerPanel>

        <Center>
          <DrawRow>
            <Strip>
              <StripGroup><Grip /><StripTools names={group1} /></StripGroup>
              <StripGroup $line={11}><Grip /><StripTools names={group2} /></StripGroup>
              <StripGroup $line={7}><StripTools names={group3} /></StripGroup>
            </Strip>
            <CanvasColumn>
              <Canvas />
              <SheetTabs>
                <SheetNav aria-label="首页"><svg width="11" height="12"><path d="M1 0v12M10 1v10L4 6z" fill="#666" stroke="#666" /></svg></SheetNav>
                <SheetNav aria-label="上一个"><svg width="7" height="12"><path d="M7 1v10L0 6z" fill="#555" /></svg></SheetNav>
                <SheetNav aria-label="下一个"><svg width="7" height="12"><path d="M0 1v10l7-5z" fill="#555" /></svg></SheetNav>
                <SheetNav aria-label="末页"><svg width="11" height="12"><path d="M10 0v12M1 1v10l6-5z" fill="#666" stroke="#666" /></svg></SheetNav>
                <ModelTab>模型</ModelTab>
                <LayoutTab>
                  <svg width="8" height="18"><path d="M7 0L1 12l4 6h3" fill="none" stroke="#777" /></svg>
                  Layout1
                  <svg width="17" height="18"><path d="M-56 17h64L16 0" fill="none" stroke="#777" /></svg>
                </LayoutTab>
              </SheetTabs>
            </CanvasColumn>
          </DrawRow>
          <CommandArea>
            <CommandGrip />
            <CommandBox>
              <CommandLog>
                <div>命令:</div>
                <div>命令:</div>
              </CommandLog>
              <CommandInput aria-label="命令行" />
            </CommandBox>
          </CommandArea>
        </Center>

        <Rail>
          <RailTools>
            <RailHead>
              <SmallButton aria-label="收起"><svg width="7" height="3"><path d="M0 0h7v3H0z" /></svg></SmallButton>
              <RailGrip />
            </RailHead>
            <RailList>
              {railIcons.map(([name, icon, off], i) => (
                <RailButton key={name} aria-label={name} $off={off} $lit={i === railIcons.length - 1}>{icon}</RailButton>
              ))}
            </RailList>
          </RailTools>
          <RailEdge><EdgeNavy /><EdgeGap /><EdgeBlue /><EdgeDots /></RailEdge>
        </Rail>
      </Work>

      <Taskbar>
        <TaskButton $w={23} aria-label="搜索"><svg width="23" height="16"><circle cx="-3" cy="6" r="7" fill="none" stroke="#fff" strokeWidth="1.5" /></svg></TaskButton>
        <TaskButton aria-label="任务视图"><svg width="20" height="20" viewBox="0 0 20 20"><path d="M1 1v4h12V1M1 19v-4h12v4M1 5v10h12V5zM18 0v6M18 12v8" fill="none" stroke="#fff" strokeWidth="1.5" /><path d="M17 7h3v3h-3z" fill="#fff" /></svg></TaskButton>
        <TaskButton $w={67} aria-label="Edge">
          <svg width="30" height="30" viewBox="0 0 30 30">
            <defs>
              <linearGradient id="edgeTop" x1="0" y1="0" x2="1" y2="1"><stop offset="0" stopColor="#2aa8e8" /><stop offset="1" stopColor="#58de58" /></linearGradient>
              <linearGradient id="edgeLow" x1="0" y1="0" x2="1" y2="1"><stop offset="0" stopColor="#1c8ee0" /><stop offset="1" stopColor="#0c50a4" /></linearGradient>
            </defs>
            <circle cx="15" cy="15" r="15" fill="url(#edgeLow)" />
            <path d="M0 13C2-3 28-5 30 14c0 5-5 7-10 6-4-1-1-3-2-6-2-8-14-8-18-1z" fill="url(#edgeTop)" />
            <path d="M12 15c-2 6 4 11 13 9l4-3c-3 2-12 3-12-3 2-2 1-5-1-6-2 0-3 1-4 3z" fill="#2b353b" />
            <path d="M12 14c-5 5-1 14 6 16-8 0-17-5-14-14 2-4 6-5 10-4z" fill="#1268bc" />
          </svg>
        </TaskButton>
        <TaskGap />
        <TaskButton $open $w={51} aria-label="文件资源管理器">
          <svg width="28" height="24" viewBox="0 0 28 24"><path d="M0 2l2-2h10l2 3h13v20H0z" fill="#e8a820" /><path d="M0 5h27v18H0z" fill="#ffdc68" /><path d="M5 23v-8q0-2 2-2h14q2 0 2 2v8h-5v-5h-8v5z" fill="#3c8fd0" /></svg>
        </TaskButton>
        <TaskButton $w={68} aria-label="应用商店">
          <svg width="29" height="30" viewBox="0 0 29 30"><path d="M9 9C9-1 20-1 20 9" fill="none" stroke="#fff" strokeWidth="2" /><path d="M0 8h29v21H0z" fill="#fff" /><path d="M8 12h6v6H8z" fill="#e8502a" /><path d="M15 12h6v6h-6z" fill="#7cb82c" /><path d="M8 19h6v6H8z" fill="#1c9ce0" /><path d="M15 19h6v6h-6z" fill="#fcb814" /></svg>
        </TaskButton>
        <TaskButton $active aria-label="CASS 9.1">
          <svg width="28" height="30" viewBox="0 0 28 30"><path d="M0 7h28v15l-7 7H0z" fill="#fff" /><path d="M21 29l1-7h6z" fill="#c8c8c8" /><path d="M14 7C13-2 4 0 4 11s8 13 11 6" fill="none" stroke="#c02018" strokeWidth="4" /><text x="16" y="21" fontSize="9" fontWeight="700" fontFamily="Liberation Serif, serif" fill="#222">9.1</text></svg>
        </TaskButton>
        <Tray>
          <button aria-label="显示隐藏的图标"><svg width="16" height="10"><path d="M0 9l8-8 8 8" fill="none" stroke="#fff" strokeWidth="1.5" /></svg></button>
          <button aria-label="网络"><svg width="21" height="17"><path d="M5 2h15v12H2V7M7 16h8M11 14v2" fill="none" stroke="#fff" strokeWidth="1.5" /><path d="M1 1h4v4H1z" fill="none" stroke="#fff" /></svg></button>
          <button aria-label="音量"><svg width="21" height="18"><path d="M1 6h3l4-4v14l-4-4H1zM11 6q2 3 0 6M14 4q4 5 0 10M17 2q6 7 0 14" fill="none" stroke="#fff" strokeWidth="1.3" /></svg></button>
          <Lang>英</Lang>
          <Clock>
            <ClockLine $indent>15:51</ClockLine>
            <ClockLine>2022/9/</ClockLine>
          </Clock>
        </Tray>
      </Taskbar>

      <Overlay>
        <MessageBox role="dialog" aria-label="AutoCAD 信息">
          <BoxHead>
            <BoxTitle>AutoCAD 信息</BoxTitle>
            <button aria-label="关闭"><svg width="13" height="13"><path d="M0 0l13 13M13 0L0 13" stroke="#111" /></svg></button>
          </BoxHead>
          <BoxText>此软件已经注册为正式版!</BoxText>
          <OkButton>确定</OkButton>
        </MessageBox>
      </Overlay>
      <Pointer><svg width="13" height="20" viewBox="0 0 13 20"><path d="M1 1v15l4-3 3 6 2-1-2-6h4z" fill="#fff" stroke="#222" /></svg></Pointer>
    </Desktop>
  );
}
